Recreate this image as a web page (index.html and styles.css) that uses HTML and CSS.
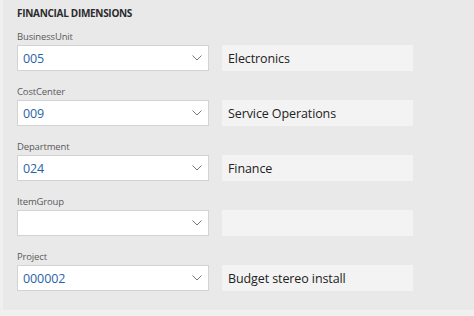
FILE: index.html
```html
<!DOCTYPE html>
<html>
<head>
<meta charset="utf-8">
<link rel="stylesheet" href="styles.css">
</head>
<body>
<div class="panel">
  <div class="heading">FINANCIAL DIMENSIONS</div>
  <div class="field">
    <div class="label">BusinessUnit</div>
    <div class="row">
      <div class="select"><span class="value">005</span><svg class="chev" width="10" height="6" viewBox="0 0 10 6"><path d="M0.5 0.5 L5 5 L9.5 0.5" fill="none" stroke="#777" stroke-width="1"/></svg></div>
      <div class="desc">Electronics</div>
    </div>
  </div>
  <div class="field">
    <div class="label">CostCenter</div>
    <div class="row">
      <div class="select"><span class="value">009</span><svg class="chev" width="10" height="6" viewBox="0 0 10 6"><path d="M0.5 0.5 L5 5 L9.5 0.5" fill="none" stroke="#777" stroke-width="1"/></svg></div>
      <div class="desc">Service Operations</div>
    </div>
  </div>
  <div class="field">
    <div class="label">Department</div>
    <div class="row">
      <div class="select"><span class="value">024</span><svg class="chev" width="10" height="6" viewBox="0 0 10 6"><path d="M0.5 0.5 L5 5 L9.5 0.5" fill="none" stroke="#777" stroke-width="1"/></svg></div>
      <div class="desc">Finance</div>
    </div>
  </div>
  <div class="field">
    <div class="label">ItemGroup</div>
    <div class="row">
      <div class="select"><span class="value"></span><svg class="chev" width="10" height="6" viewBox="0 0 10 6"><path d="M0.5 0.5 L5 5 L9.5 0.5" fill="none" stroke="#777" stroke-width="1"/></svg></div>
      <div class="desc"></div>
    </div>
  </div>
  <div class="field">
    <div class="label">Project</div>
    <div class="row">
      <div class="select"><span class="value">000002</span><svg class="chev" width="10" height="6" viewBox="0 0 10 6"><path d="M0.5 0.5 L5 5 L9.5 0.5" fill="none" stroke="#777" stroke-width="1"/></svg></div>
      <div class="desc">Budget stereo install</div>
    </div>
  </div>
</div>
</body>
</html>
```
FILE: styles.css
```css
html, body {
  margin: 0;
  padding: 0;
  background: #f0f0f0;
}
body {
  width: 474px;
  height: 316px;
  overflow: hidden;
  font-family: "Open Sans", "Noto Sans", sans-serif;
}
.panel {
  margin: 0 0 0 3px;
  height: 310px;
  box-sizing: border-box;
  background: #e9e9e9;
  padding: 6px 0 0 14px;
  display: flex;
  flex-direction: column;
}
.heading {
  font-size: 10px;
  font-weight: 700;
  color: #2b2b2b;
  line-height: 14px;
  letter-spacing: -0.3px;
}
.field {
  display: flex;
  flex-direction: column;
}
.heading + .field {
  margin-top: 10px;
}
.field + .field {
  margin-top: 14px;
}
.label {
  font-size: 9.5px;
  color: #5a5a5a;
  line-height: 14px;
  height: 15px;
  letter-spacing: -0.15px;
}
.row {
  display: flex;
  gap: 13px;
}
.select {
  width: 192px;
  height: 26px;
  box-sizing: border-box;
  background: #fff;
  border: 1px solid #d3d3d3;
  display: flex;
  align-items: center;
  justify-content: space-between;
  padding: 0 6px 0 5px;
}
.value {
  font-size: 12.5px;
  color: #2a63a8;
  letter-spacing: -0.1px;
}
.chev {
  display: block;
}
.desc {
  width: 191px;
  height: 26px;
  box-sizing: border-box;
  background: #f3f3f3;
  display: flex;
  align-items: center;
  padding-left: 6px;
  font-size: 12.5px;
  color: #222;
  letter-spacing: -0.1px;
}
```
